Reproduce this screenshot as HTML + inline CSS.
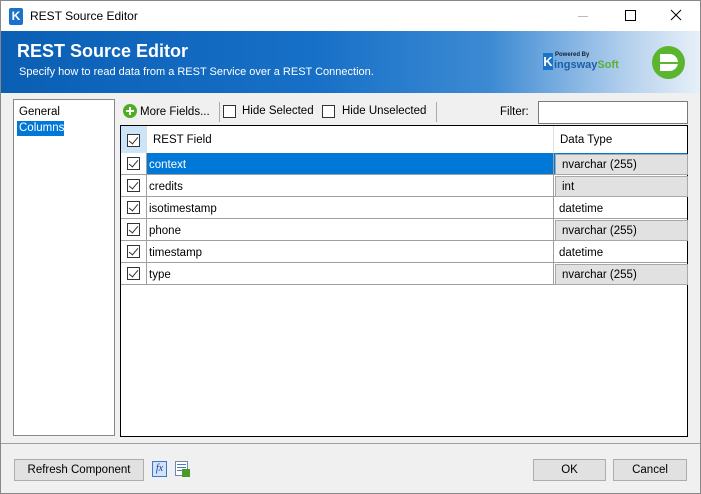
<!DOCTYPE html>
<html><head><style>
*{box-sizing:border-box;margin:0;padding:0}
body{width:701px;height:494px;overflow:hidden;font-family:"Liberation Sans",sans-serif;font-size:11.5px;color:#000;background:#f0f0f0;position:relative}
.abs{position:absolute}
.frame{position:absolute;left:0;top:0;width:701px;height:494px;border:1px solid #888;z-index:10}
.title{left:0;top:0;width:701px;height:31px;background:#fff}
.banner{left:0;top:31px;width:701px;height:62px;background:linear-gradient(90deg,#0a5fb4 0%,#1770c7 45%,#3d8ad3 70%,#b7d2ee 90%,#e8f0f8 100%)}
.cb{position:absolute;width:13px;height:13px;border:1px solid #333;background:#fff}
.cb.c::after{content:"";position:absolute;left:3px;top:0px;width:4px;height:8px;border:solid #333;border-width:0 1.5px 1.5px 0;transform:rotate(40deg)}
.row{position:absolute;left:121px;width:566px;height:22px;border-bottom:1px solid #a0a0a0;background:#fff}
.row .f{position:absolute;left:28px;top:5px;line-height:14px;display:block}
.row .chk{position:absolute;left:0;top:0;width:26px;height:21px;border-right:1px solid #a0a0a0;background:#fff}
.row .dt{position:absolute;left:432px;top:0;width:134px;height:21px;border-left:1px solid #a0a0a0}
.row .dt span{position:absolute;left:5px;top:5px;line-height:14px;display:block}
.row .dt.g span{left:8px}
.row .dt.g::before{content:"";position:absolute;left:1px;top:1px;width:131px;height:19px;background:#e1e1e1;border:1px solid #a8a8a8}
.btn{position:absolute;height:22px;background:#e1e1e1;border:1px solid #adadad;text-align:center;line-height:20px}
</style></head><body>
<div class="frame"></div>
<div class="abs title">
 <div class="abs" style="left:9px;top:8px;width:14px;height:17px;background:#1a73c9;border-radius:2px;color:#fff;font-weight:bold;font-size:12px;text-align:center;line-height:17px">K</div>
 <div class="abs" style="left:30px;top:9px;font-size:12px">REST Source Editor</div>
 <div class="abs" style="left:578px;top:16px;width:10px;height:1px;background:#bbb"></div>
 <div class="abs" style="left:625px;top:10px;width:11px;height:11px;border:1px solid #000"></div>
 <svg class="abs" style="left:670px;top:9px" width="12" height="12"><path d="M1 1L11 11M11 1L1 11" stroke="#000" stroke-width="1"/></svg>
</div>
<div class="abs banner">
 <div class="abs" style="left:17px;top:10px;color:#fff;font-weight:bold;font-size:18px">REST Source Editor</div>
 <div class="abs" style="left:19px;top:35px;color:#fff;font-size:11px">Specify how to read data from a REST Service over a REST Connection.</div>
 <div class="abs" style="left:543px;top:22px;width:10px;height:17px;background:#1a73c9;color:#fff;font-weight:bold;font-size:13px;line-height:17px;text-align:center">K</div>
 <div class="abs" style="left:555px;top:21px;font-size:6px;color:#123;font-weight:bold">Powered By</div>
 <div class="abs" style="left:554px;top:28px;font-size:11px;font-weight:bold;color:#1a5fa8">ingsway<span style="color:#5bb030">Soft</span></div>
 <div class="abs" style="left:652px;top:15px;width:33px;height:33px;border-radius:50%;background:#5cb52e"></div>
 <div class="abs" style="left:660px;top:23px;width:18px;height:17px;border-radius:0 9px 9px 0;background:#fff"></div>
 <div class="abs" style="left:660px;top:31px;width:18px;height:2px;background:#5cb52e"></div>
</div>
<div class="abs" style="left:13px;top:99px;width:102px;height:337px;background:#fff;border:1px solid #828790">
 <div class="abs" style="left:5px;top:6px">General</div>
 <div class="abs" style="left:3px;top:21px;width:47px;height:15px;background:#0078d7;color:#fff;padding-left:2px;line-height:15px">Columns</div>
</div>
<div class="abs" style="left:123px;top:104px;width:14px;height:14px;border-radius:50%;background:#4caf20"></div>
<div class="abs" style="left:126px;top:110px;width:8px;height:2px;background:#fff"></div>
<div class="abs" style="left:129px;top:107px;width:2px;height:8px;background:#fff"></div>
<div class="abs" style="left:140px;top:106px">More Fields...</div>
<div class="abs" style="left:219px;top:102px;width:1px;height:20px;background:#aaa"></div>
<div class="cb" style="left:223px;top:105px"></div>
<div class="abs" style="left:242px;top:105px">Hide Selected</div>
<div class="cb" style="left:322px;top:105px"></div>
<div class="abs" style="left:342px;top:105px">Hide Unselected</div>
<div class="abs" style="left:436px;top:102px;width:1px;height:20px;background:#aaa"></div>
<div class="abs" style="left:500px;top:106px">Filter:</div>
<div class="abs" style="left:538px;top:101px;width:150px;height:23px;background:#fff;border:1px solid #7a7a7a"></div>
<div class="abs" style="left:120px;top:125px;width:568px;height:312px;background:#fff;border:1px solid #000">
 <div class="abs" style="left:0;top:0;width:26px;height:27px;background:#cce4f7;border-right:1px solid #ddd"></div>
 <div class="cb c" style="left:6px;top:8px"></div>
 <div class="abs" style="left:32px;top:8px">REST Field</div>
 <div class="abs" style="left:432px;top:0;width:1px;height:27px;background:#e0e0e0"></div>
 <div class="abs" style="left:439px;top:8px">Data Type</div>
 <div class="abs" style="left:0;top:27px;width:566px;height:1px;background:#a0a0a0"></div>
</div>
<div class="row" style="top:153px;background:#0078d7;color:#fff"><div class="chk"><div class="cb c" style="left:6px;top:4px"></div></div><span class="f">context</span><div class="dt g" style="color:#000;background:#0078d7"><span style="z-index:1">nvarchar (255)</span></div></div>
<div class="row" style="top:175px"><div class="chk"><div class="cb c" style="left:6px;top:4px"></div></div><span class="f">credits</span><div class="dt g"><span>int</span></div></div>
<div class="row" style="top:197px"><div class="chk"><div class="cb c" style="left:6px;top:4px"></div></div><span class="f">isotimestamp</span><div class="dt"><span>datetime</span></div></div>
<div class="row" style="top:219px"><div class="chk"><div class="cb c" style="left:6px;top:4px"></div></div><span class="f">phone</span><div class="dt g"><span>nvarchar (255)</span></div></div>
<div class="row" style="top:241px"><div class="chk"><div class="cb c" style="left:6px;top:4px"></div></div><span class="f">timestamp</span><div class="dt"><span>datetime</span></div></div>
<div class="row" style="top:263px"><div class="chk"><div class="cb c" style="left:6px;top:4px"></div></div><span class="f">type</span><div class="dt g"><span>nvarchar (255)</span></div></div>
<div class="abs" style="left:0;top:443px;width:701px;height:1px;background:#a0a0a0"></div>
<div class="btn" style="left:14px;top:459px;width:130px">Refresh Component</div>
<div class="abs" style="left:152px;top:461px;width:15px;height:16px;background:#cfe4fa;border:1px solid #3a78c8;font-style:italic;font-size:10px;color:#1a3c8c;text-align:center;line-height:14px;font-family:'Liberation Serif',serif">fx</div>
<div class="abs" style="left:175px;top:461px;width:13px;height:15px;background:#fff;border:1px solid #6a8ab0"></div>
<div class="abs" style="left:177px;top:464px;width:9px;height:1px;background:#4a7ac0;box-shadow:0 3px 0 #4a7ac0,0 6px 0 #4a7ac0"></div>
<div class="abs" style="left:182px;top:469px;width:8px;height:8px;background:#4a9a2a"></div>
<div class="btn" style="left:533px;top:459px;width:73px">OK</div>
<div class="btn" style="left:613px;top:459px;width:74px">Cancel</div>
</body></html>
